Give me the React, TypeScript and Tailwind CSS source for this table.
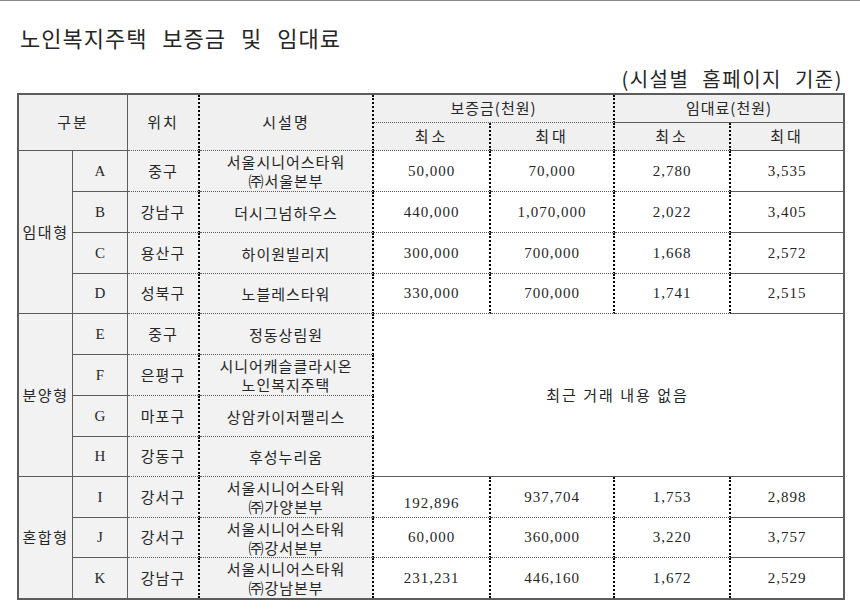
import React from "react";

const kr = "font-['Noto_Sans_CJK_KR',sans-serif]";
const num = "font-['Liberation_Serif','Noto_Sans_CJK_KR',serif]";

const solidR = "border-r border-r-[#5c5c5c]";
const dotR = "border-r-2 border-r-black border-dotted";
const solidB = "border-b border-b-[#5c5c5c]";

type Row = {
  code: string;
  area: string;
  name: string[];
  values?: string[];
  h: string;
};

const groups: { label: string; rows: Row[]; empty?: boolean }[] = [
  {
    label: "임대형",
    rows: [
      { code: "A", area: "중구", name: ["서울시니어스타워", "㈜서울본부"], values: ["50,000", "70,000", "2,780", "3,535"], h: "h-[41px]" },
      { code: "B", area: "강남구", name: ["더시그넘하우스"], values: ["440,000", "1,070,000", "2,022", "3,405"], h: "h-[41px]" },
      { code: "C", area: "용산구", name: ["하이원빌리지"], values: ["300,000", "700,000", "1,668", "2,572"], h: "h-[41px]" },
      { code: "D", area: "성북구", name: ["노블레스타워"], values: ["330,000", "700,000", "1,741", "2,515"], h: "h-[40px]" },
    ],
  },
  {
    label: "분양형",
    empty: true,
    rows: [
      { code: "E", area: "중구", name: ["정동상림원"], h: "h-[41px]" },
      { code: "F", area: "은평구", name: ["시니어캐슬클라시온", "노인복지주택"], h: "h-[41px]" },
      { code: "G", area: "마포구", name: ["상암카이저팰리스"], h: "h-[41px]" },
      { code: "H", area: "강동구", name: ["후성누리움"], h: "h-[40px]" },
    ],
  },
  {
    label: "혼합형",
    rows: [
      { code: "I", area: "강서구", name: ["서울시니어스타워", "㈜가양본부"], values: ["192,896", "937,704", "1,753", "2,898"], h: "h-[41px]" },
      { code: "J", area: "강서구", name: ["서울시니어스타워", "㈜강서본부"], values: ["60,000", "360,000", "3,220", "3,757"], h: "h-[40px]" },
      { code: "K", area: "강남구", name: ["서울시니어스타워", "㈜강남본부"], values: ["231,231", "446,160", "1,672", "2,529"], h: "h-[40px]" },
    ],
  },
];

export default function App() {
  return (
    <div className={`w-[860px] h-[616px] overflow-hidden bg-white text-[#262626] border-t border-t-[#8a8a8a] ${kr}`}>
      <h1 className="ml-[20px] mt-[22px] text-[22px] leading-[28px] tracking-[1px] [word-spacing:9px] font-normal">
        노인복지주택 보증금 및 임대료
      </h1>
      <p className="mt-[15px] w-[843px] text-right text-[20px] leading-[26px] tracking-[1.5px] [word-spacing:7px]">
        (시설별 홈페이지 기준)
      </p>
      <table className="ml-[17px] mt-[1px] w-[826px] table-fixed border-separate border-spacing-0 border-2 border-[#5c5c5c] text-[15px]">
        <colgroup>
          <col className="w-[54px]" />
          <col className="w-[55px]" />
          <col className="w-[72px]" />
          <col className="w-[174px]" />
          <col className="w-[117px]" />
          <col className="w-[124px]" />
          <col className="w-[116px]" />
          <col className="w-[112px]" />
        </colgroup>
        <thead className="bg-[#f0f0f0]">
          <tr className="h-[28px]">
            <th colSpan={2} rowSpan={2} className={`font-normal tracking-[2px] ${solidR} ${solidB}`}>구분</th>
            <th rowSpan={2} className={`font-normal tracking-[2px] ${dotR} ${solidB}`}>위치</th>
            <th rowSpan={2} className={`font-normal tracking-[2px] ${dotR} ${solidB}`}>시설명</th>
            <th colSpan={2} className={`font-normal tracking-[1px] ${dotR} ${solidB}`}>보증금(천원)</th>
            <th colSpan={2} className={`font-normal tracking-[1px] ${solidB}`}>임대료(천원)</th>
          </tr>
          <tr className="h-[28px]">
            <th className={`font-normal tracking-[3px] ${dotR} ${solidB}`}>최소</th>
            <th className={`font-normal tracking-[3px] ${dotR} ${solidB}`}>최대</th>
            <th className={`font-normal tracking-[3px] ${dotR} ${solidB}`}>최소</th>
            <th className={`font-normal tracking-[3px] ${solidB}`}>최대</th>
          </tr>
        </thead>
        <tbody>
          {groups.map((g, gi) => {
            const lastGroup = gi === groups.length - 1;
            return g.rows.map((r, ri) => {
              const lastRow = lastGroup && ri === g.rows.length - 1;
              const rb = lastRow ? "" : solidB;
              return (
                <tr key={r.code} className={r.h}>
                  {ri === 0 && (
                    <td
                      rowSpan={g.rows.length}
                      className={`bg-[#f2f2f2] text-center tracking-[1.5px] ${solidR} ${lastGroup ? "" : solidB}`}
                    >
                      {g.label}
                    </td>
                  )}
                  <td className={`bg-[#f2f2f2] text-center ${num} ${solidR} ${rb}`}>{r.code}</td>
                  <td className={`bg-[#f2f2f2] text-center tracking-[1px] ${dotR} ${rb}`}>{r.area}</td>
                  <td className={`bg-[#f2f2f2] text-center tracking-[1px] leading-[19px] ${dotR} ${rb}`}>
                    {r.name.map((n) => (
                      <div key={n}>{n}</div>
                    ))}
                  </td>
                  {g.empty
                    ? ri === 0 && (
                        <td
                          colSpan={4}
                          rowSpan={g.rows.length}
                          className={`bg-white text-center pl-[18px] tracking-[2px] ${solidB}`}
                        >
                          최근 거래 내용 없음
                        </td>
                      )
                    : r.values!.map((v, vi) => (
                        <td
                          key={vi}
                          className={`bg-white text-center tracking-[1px] ${num} ${vi < 3 ? dotR : ""} ${rb} ${
                            r.code === "I" && vi === 0 ? "align-bottom pb-[3px]" : ""
                          }`}
                        >
                          {v}
                        </td>
                      ))}
                </tr>
              );
            });
          })}
        </tbody>
      </table>
    </div>
  );
}
